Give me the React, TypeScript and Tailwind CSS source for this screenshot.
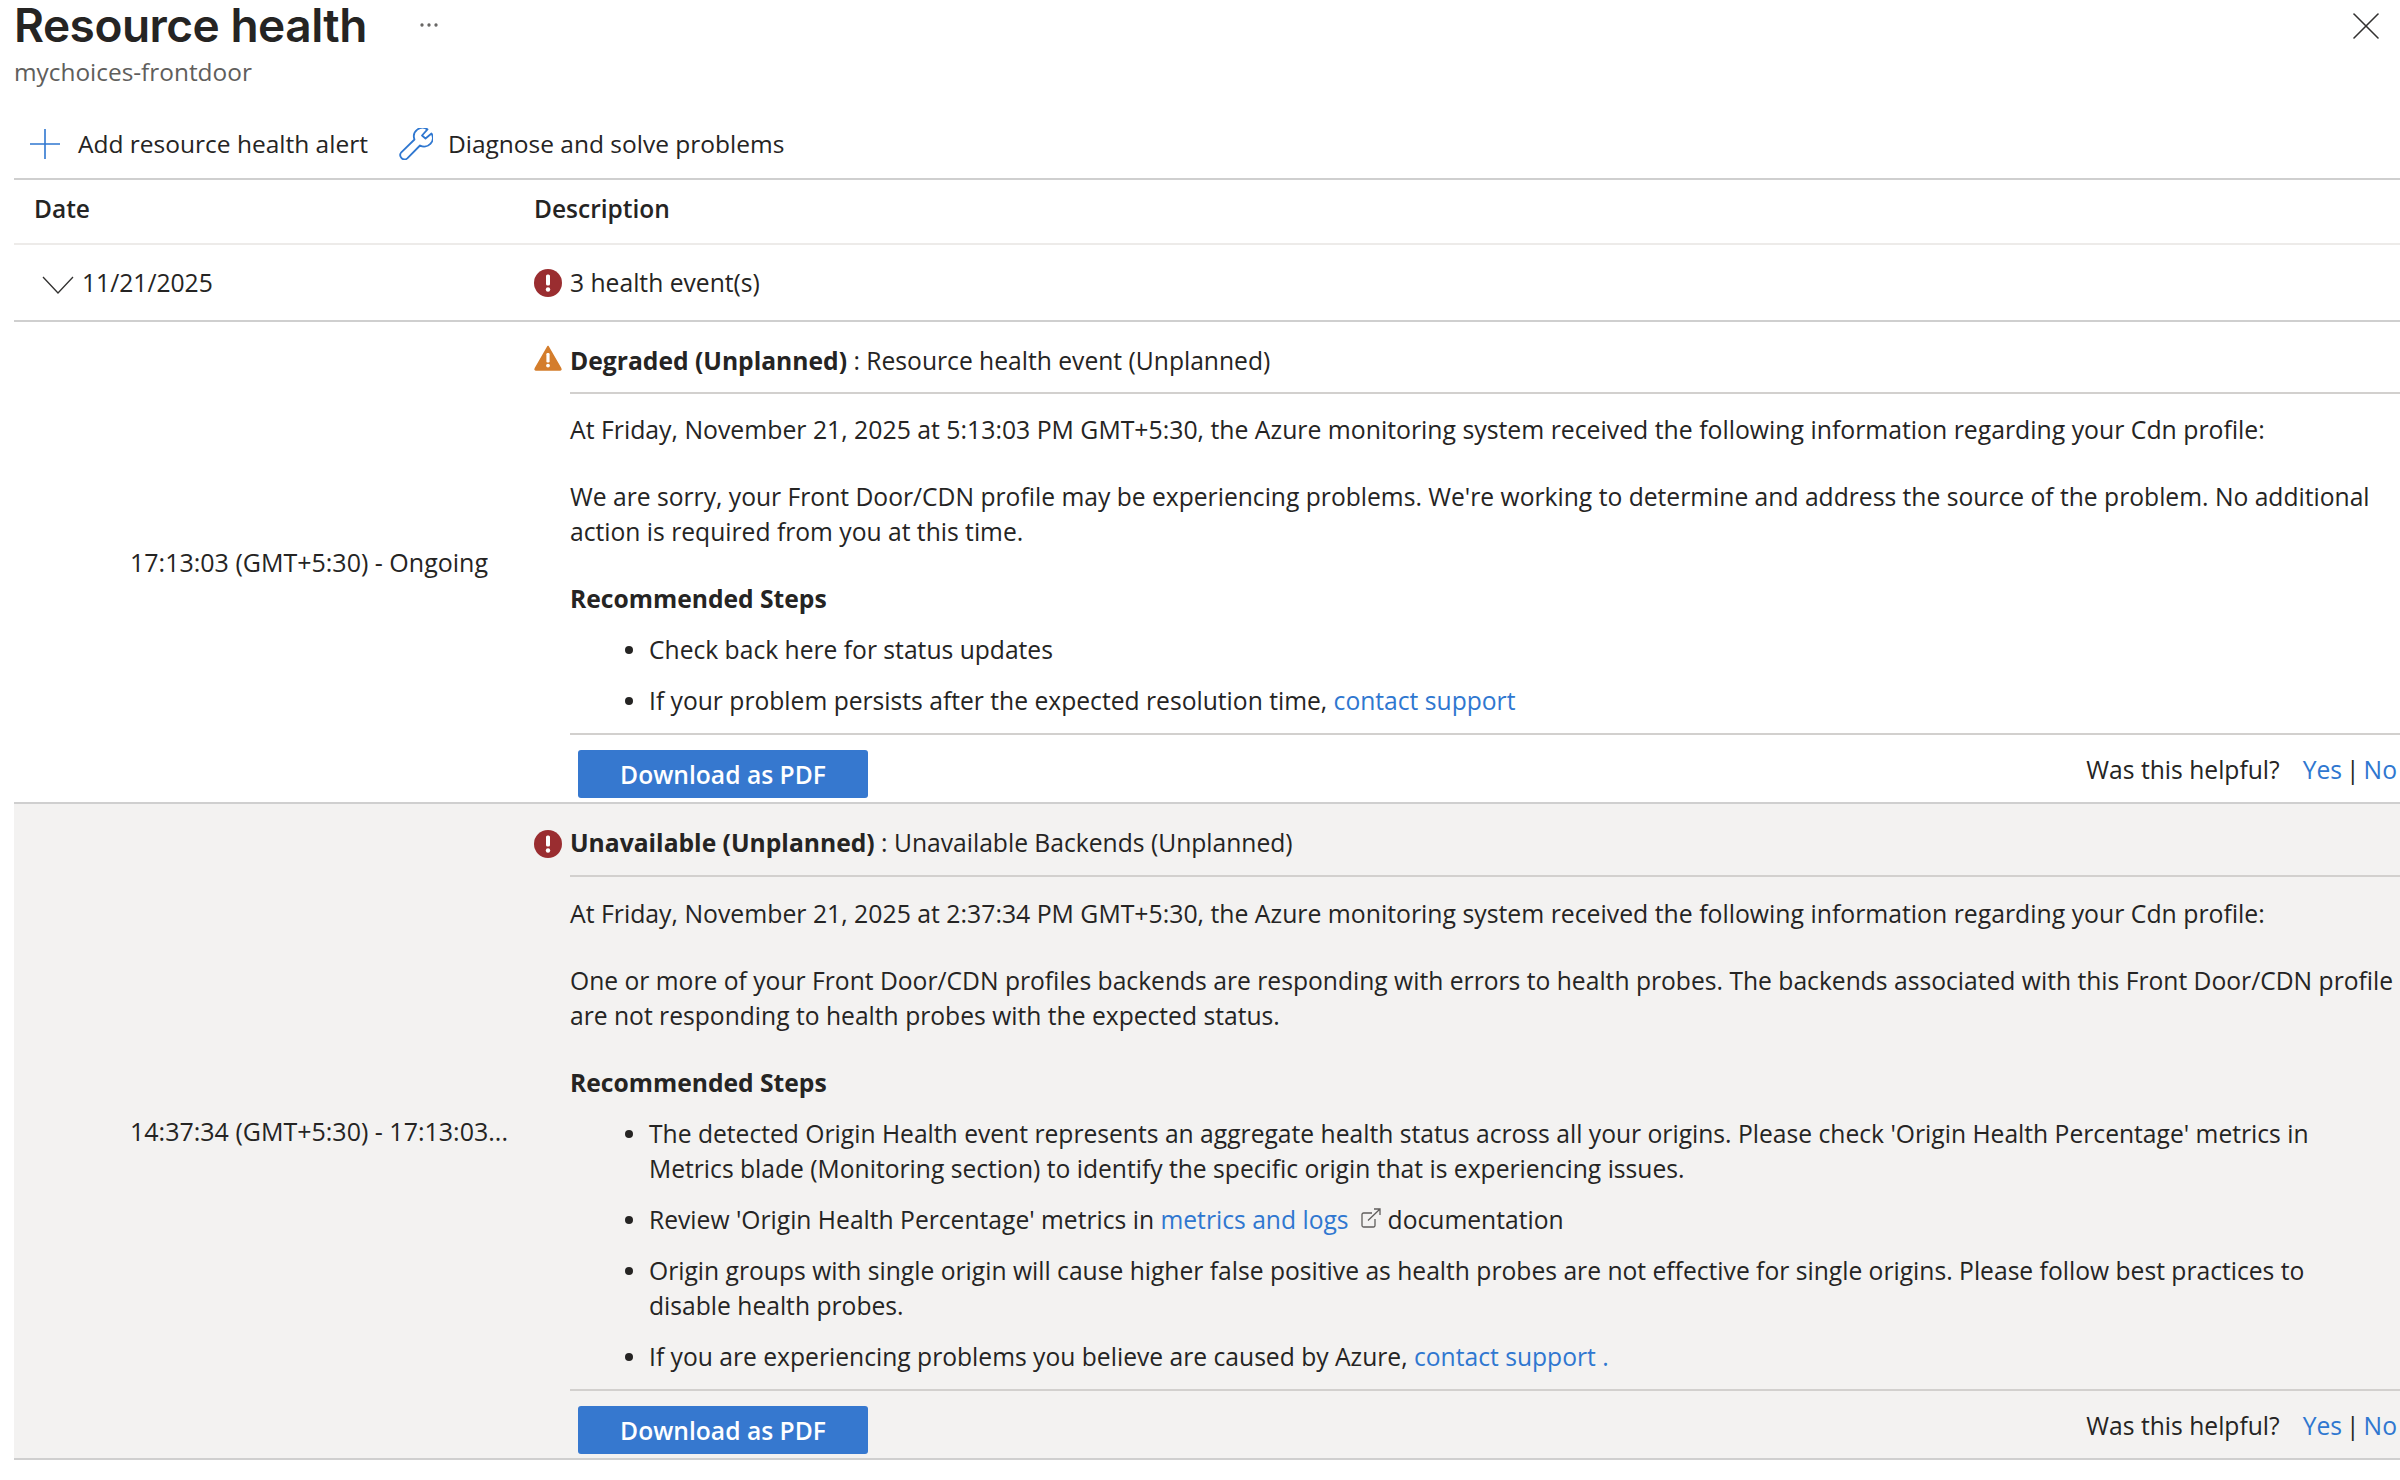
import { MoreHorizontal, X } from "lucide-react";
import type { ReactNode } from "react";

const link = "text-[#2f77d0]";

const ErrorIcon = () => (
  <svg viewBox="0 0 28 28" className="h-7 w-7 shrink-0">
    <circle cx="14" cy="14" r="14" fill="#9a2d30" />
    <rect x="12" y="5.5" width="4" height="11" rx="1.6" fill="#fff" />
    <circle cx="14" cy="20.5" r="2.2" fill="#fff" />
  </svg>
);

const WarningIcon = () => (
  <svg viewBox="0 0 28 26" className="h-[26px] w-7 shrink-0">
    <path d="M14 1.5 26.8 23.6a.9.9 0 0 1-.8 1.4H2a.9.9 0 0 1-.8-1.4Z" fill="#d47d2c" stroke="#d47d2c" strokeWidth="1.5" strokeLinejoin="round" />
    <rect x="12.4" y="8" width="3.2" height="9.5" rx="1.2" fill="#fff" />
    <circle cx="14" cy="20.6" r="1.9" fill="#fff" />
  </svg>
);

const WrenchIcon = () => (
  <svg viewBox="0 0 34 32" className="h-8 w-[34px] shrink-0" fill="none" stroke="#2f77d0" strokeWidth="1.8" strokeLinejoin="round">
    <path d="M28.500 1.400A8.600 8.600 0 0 0 15.500 11.500L2.300 24.300a4.300 4.300 0 0 0 6 6.100L21 17.500A8.600 8.600 0 0 0 32.500 5.500L26.500 10.500 23 7.500Z" />
  </svg>
);

const ExternalIcon = () => (
  <svg viewBox="0 0 20 20" className="ml-[12px] mr-[7px] inline h-5 w-5 align-[1px]" fill="none" stroke="#605e5c" strokeWidth="1.3">
    <path d="M11 5H2.500A1.500 1.500 0 0 0 1 6.500v11A1.500 1.500 0 0 0 2.500 19h10a1.500 1.500 0 0 0 1.500-1.500V11" />
    <path d="M7 12.500 19 1M13 1h6v6" />
  </svg>
);

const Bullet = ({ children }: { children: ReactNode }) => (
  <li className="flex">
    <span className="flex h-[35px] w-[79px] shrink-0 items-center pl-[55px]">
      <span className="h-[8px] w-[8px] rounded-full bg-[#252423]" />
    </span>
    <div>{children}</div>
  </li>
);

type EventProps = {
  time: string;
  icon: ReactNode;
  title: string;
  subtitle: string;
  info: string;
  body: string;
  steps: ReactNode[];
  shaded?: boolean;
};

const EventRow = ({ time, icon, title, subtitle, info, body, steps, shaded }: EventProps) => (
  <div className={`flex border-b-2 border-[#cfcfcf] ${shaded ? "bg-[#f3f2f1]" : "bg-white"}`}>
    <div className="flex w-[520px] shrink-0 items-center overflow-hidden pl-[116px] pr-[6px] text-[25px]">
      <span className="truncate">{time}</span>
    </div>
    <div className="flex min-w-0 flex-1">
      <div className="w-[36px] shrink-0 pt-[23px]">{icon}</div>
      <div className="min-w-0 flex-1">
        <div className={`flex items-center border-b-2 border-[#d2d0ce] pt-[6px] ${shaded ? "h-[73px]" : "h-[72px]"}`}>
          <span>
            <b className="font-bold">{title}</b> : {subtitle}
          </span>
        </div>
        <div className={shaded ? "pt-[19px]" : "pt-[18px]"}>
          <p className="text-[24.8px]">{info}</p>
          <p className="mt-[32px]">{body}</p>
          <h3 className="mt-[32px] font-bold">Recommended Steps</h3>
          <ul className="mt-[16px] flex flex-col gap-[16px] pb-[15px] pr-[60px]">
            {steps.map((step, i) => (
              <Bullet key={i}>{step}</Bullet>
            ))}
          </ul>
        </div>
        <div className="flex h-[69px] items-start justify-between border-t-2 border-[#d2d0ce] pl-[8px] pr-[3px] pt-[15px]">
          <button className="flex h-[48px] w-[290px] items-center justify-center rounded-[3px] bg-[#3678cf] font-semibold text-white">
            Download as PDF
          </button>
          <div className="flex pt-[2px]">
            Was this helpful?<span className={`ml-[23px] ${link}`}>Yes</span>
            <span className="mx-[4px]">|</span>
            <span className={link}>No</span>
          </div>
        </div>
      </div>
    </div>
  </div>
);

export default function App() {
  return (
    <div className="h-[1480px] w-[2400px] overflow-hidden bg-white pl-[14px] font-['Open_Sans',sans-serif] text-[24.65px] leading-[35px] text-[#252423]">
      {/* Header */}
      <div className="flex h-[88px] items-start justify-between">
        <div>
          <div className="flex items-center">
            <h1 className="font-['Inter',sans-serif] text-[46px] leading-[50px] font-semibold tracking-[-0.5px] text-[#252423]">
              Resource health
            </h1>
            <MoreHorizontal className="ml-[50px] h-6 w-6 text-[#605e5c]" strokeWidth={1.3} />
          </div>
          <div className="mt-[7px] text-[24.4px] leading-[30px] text-[#605e5c]">mychoices-frontdoor</div>
        </div>
        <button className="mr-[10px] mt-[2px]">
          <X className="h-12 w-12 text-[#323130]" strokeWidth={0.8} />
        </button>
      </div>

      {/* Toolbar */}
      <div className="flex h-[92px] items-center border-b-2 border-[#cfcfcf] pl-[16px] pt-[21px] text-[24.5px]">
        <svg viewBox="0 0 30 30" className="h-[30px] w-[30px] shrink-0" stroke="#2f77d0" strokeWidth="1.6">
          <path d="M15 0v30M0 15h30" />
        </svg>
        <span className="ml-[18px]">Add resource health alert</span>
        <span className="ml-[31px]"><WrenchIcon /></span>
        <span className="ml-[15px]">Diagnose and solve problems</span>
      </div>

      {/* Table head */}
      <div className="flex h-[65px] items-center border-b-2 border-[#edebe9] pb-[6px] text-[24.5px] font-semibold">
        <div className="w-[520px] shrink-0 pl-[20px]">Date</div>
        <div>Description</div>
      </div>

      {/* Day row */}
      <div className="flex h-[77px] items-center border-b-2 border-[#cfcfcf]">
        <div className="flex w-[520px] shrink-0 items-center pl-[28px]">
          <svg viewBox="0 0 32 18" className="mt-[4px] h-[18px] w-[32px]" fill="none" stroke="#323130" strokeWidth="1.3">
            <path d="M1 1l15 16L31 1" />
          </svg>
          <span className="ml-[8px]">11/21/2025</span>
        </div>
        <ErrorIcon />
        <span className="ml-[8px]">3 health event(s)</span>
      </div>

      <EventRow
        time="17:13:03 (GMT+5:30) - Ongoing"
        icon={<WarningIcon />}
        title="Degraded (Unplanned)"
        subtitle="Resource health event (Unplanned)"
        info="At Friday, November 21, 2025 at 5:13:03 PM GMT+5:30, the Azure monitoring system received the following information regarding your Cdn profile:"
        body="We are sorry, your Front Door/CDN profile may be experiencing problems. We're working to determine and address the source of the problem. No additional action is required from you at this time."
        steps={[
          "Check back here for status updates",
          <>If your problem persists after the expected resolution time, <span className={link}>contact support</span></>,
        ]}
      />

      <EventRow
        shaded
        time="14:37:34 (GMT+5:30) - 17:13:03..."
        icon={<div className="mt-[3px]"><ErrorIcon /></div>}
        title="Unavailable (Unplanned)"
        subtitle="Unavailable Backends (Unplanned)"
        info="At Friday, November 21, 2025 at 2:37:34 PM GMT+5:30, the Azure monitoring system received the following information regarding your Cdn profile:"
        body="One or more of your Front Door/CDN profiles backends are responding with errors to health probes. The backends associated with this Front Door/CDN profile are not responding to health probes with the expected status."
        steps={[
          "The detected Origin Health event represents an aggregate health status across all your origins. Please check 'Origin Health Percentage' metrics in Metrics blade (Monitoring section) to identify the specific origin that is experiencing issues.",
          <>Review 'Origin Health Percentage' metrics in <span className={link}>metrics and logs</span><ExternalIcon />documentation</>,
          "Origin groups with single origin will cause higher false positive as health probes are not effective for single origins. Please follow best practices to disable health probes.",
          <>If you are experiencing problems you believe are caused by Azure, <span className={link}>contact support</span> <span className={link}>.</span></>,
        ]}
      />
    </div>
  );
}
